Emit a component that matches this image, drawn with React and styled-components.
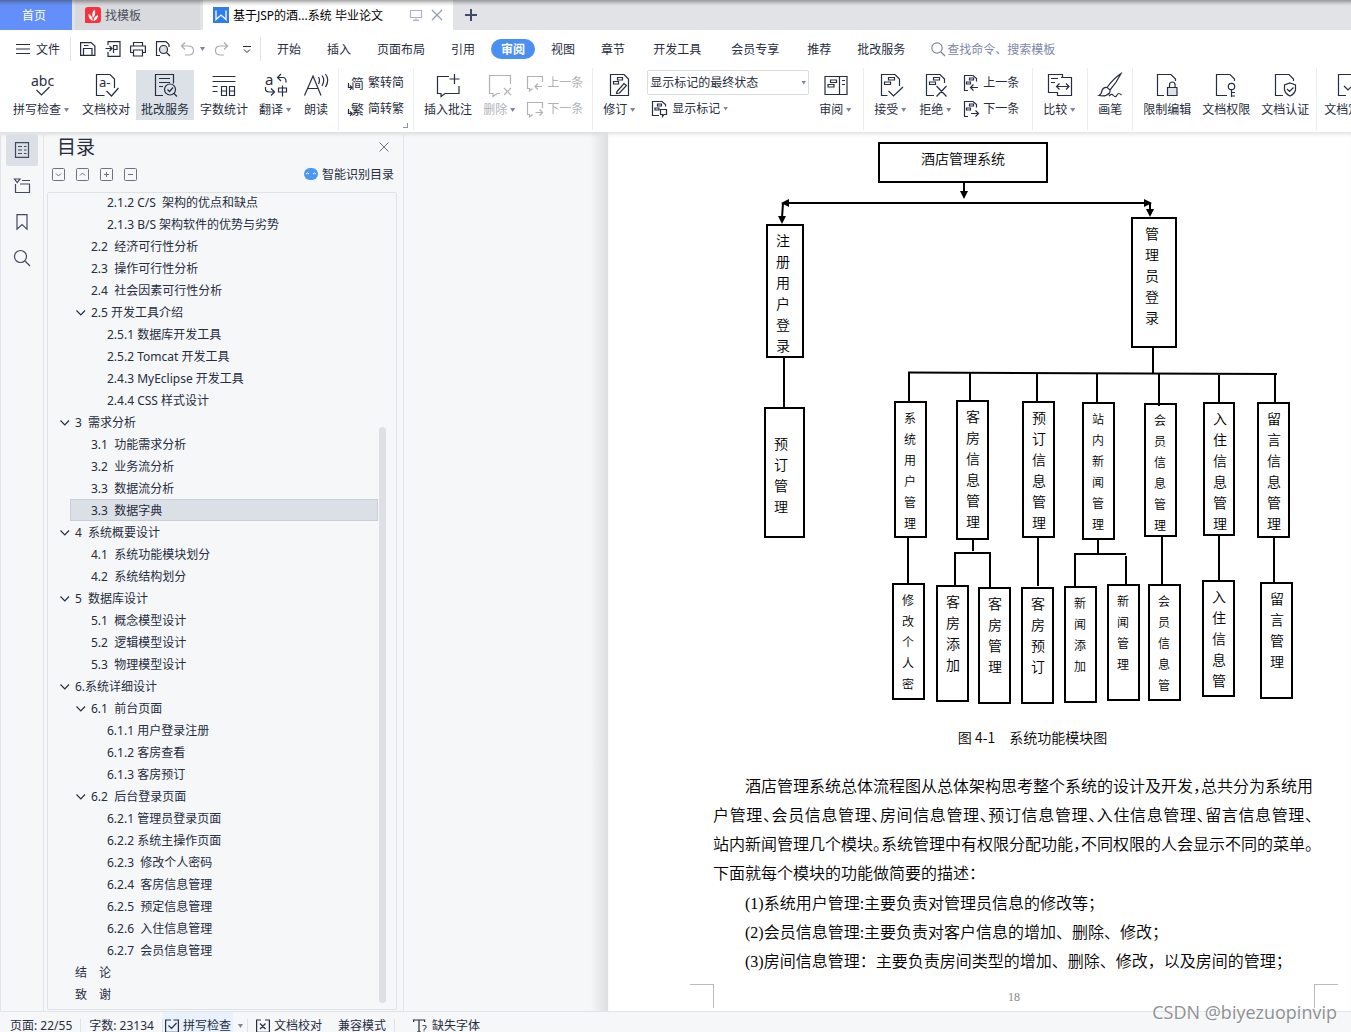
import { useState } from "react";
import styled, { createGlobalStyle } from "styled-components";

const GlobalStyle = createGlobalStyle`
* { box-sizing: border-box; }
body {
margin: 0;
overflow: hidden;
font-family: "Noto Sans", "Noto Sans CJK SC", sans-serif;
font-size: 12px;
color: #262d40;
}
button, input, select {
font: inherit;
color: inherit;
margin: 0;
padding: 0;
border: none;
background: none;
}
button { white-space: nowrap; cursor: pointer; }
svg { display: block; flex: none; overflow: visible; }
`

const Window = styled.div`
height: 100vh;
display: flex;
flex-direction: column;
background: #f5f7f9;
overflow: hidden;
position: relative;
`

/* ---------- tab bar ---------- */
const TabBar = styled.header`
height: 30px;
flex: none;
display: flex;
gap: 3px;
background: #e2e3e7;
position: relative;
&::after {
content: "";
position: absolute;
inset: 0 0 auto 0;
height: 6px;
pointer-events: none;
background: linear-gradient(rgba(60, 60, 60, 0.45), rgba(60, 60, 60, 0.12) 60%, transparent);
}
`
const HomeTab = styled.button`
width: 72px;
padding-right: 4px;
background: #628ffa;
color: white;
`
const FileTab = styled.div`
width: ${props => props.$active ? "250px" : "125px"};
padding: 0 10px;
display: flex;
align-items: center;
gap: 4px;
white-space: nowrap;
background: ${props => props.$active ? "white" : "#d9dadd"};
color: ${props => props.$active ? "black" : "#4b4f5c"};
`
const TabTools = styled.span`
margin-left: auto;
display: flex;
align-items: center;
gap: 9px;
`
const NewTab = styled.button`
padding: 0 9px;
`

/* ---------- menu ---------- */
const MenuBar = styled.nav`
height: 38px;
flex: none;
display: flex;
align-items: center;
padding-left: 16px;
background: white;
`
const FileMenu = styled.button`
display: flex;
align-items: center;
gap: 6px;
margin-right: 10px;
`
const MenuDivider = styled.span`
width: 1px;
height: 24px;
background: #dfe2e8;
`
const QuickTools = styled.div`
display: flex;
align-items: center;
gap: 9px;
padding-left: 9px;
width: 189px;
`
const MenuTabs = styled.div`
display: flex;
gap: 6px;
padding-left: 6px;
`
const MenuTab = styled.button`
height: 20px;
line-height: 18px;
border-radius: 10px;
padding: 2px ${props => props.$wide ? "12px" : "10px"} 0;
background: ${props => props.$active ? "#4a90f2" : "transparent"};
color: ${props => props.$active ? "white" : "#262d40"};
font-weight: ${props => props.$active ? "bold" : "normal"};
`
const SearchBox = styled.label`
display: flex;
align-items: center;
gap: 2px;
margin-left: 16px;
color: #7b87a8;
input { width: 130px; outline: none; }
input::placeholder { color: #7b87a8; opacity: 1; }
`

/* ---------- ribbon ---------- */
const Ribbon = styled.div`
height: 64px;
flex: none;
display: flex;
gap: 1px;
padding-left: 8px;
background: white;
overflow: hidden;
`
const RibbonButton = styled.button`
flex: none;
height: 50px;
margin-top: 2px;
padding: 3px 5px 0;
display: flex;
flex-direction: column;
align-items: center;
gap: 4px;
background: ${props => props.$active ? "#dbe1e6" : "transparent"};
color: ${props => props.disabled ? "#b0b2b7" : "#262d40"};
`
const RibbonLabel = styled.span`
display: flex;
align-items: center;
line-height: 18px;
`
const Arrow = styled.i`
width: 5px;
height: 4px;
margin: 0 2px 0 3px;
background: #7b859c;
clip-path: polygon(0 0, 100% 0, 50% 100%);
`
const UndoArrow = styled(Arrow)`
margin: 0 0 0 -5px;
`
const RibbonDivider = styled.span`
width: 1px;
height: 62px;
flex: none;
margin: 0 ${props => props.$tight ? "1px" : "4px"};
background: #eceef2;
`
const Stack = styled.div`
flex: none;
margin-top: 2px;
padding: 0 ${props => props.$wide ? "8px" : "4px"} 0 4px;
display: flex;
flex-direction: column;
gap: 1px;
position: relative;
`
const StackButton = styled.button`
height: 25px;
padding-left: ${props => props.$inset ? "5px" : "0"};
display: flex;
align-items: center;
gap: 4px;
color: ${props => props.disabled ? "#b0b2b7" : "#262d40"};
`
const Launcher = styled.i`
position: absolute;
right: 0;
bottom: 4px;
width: 5px;
height: 5px;
border: solid #8b93a5;
border-width: 0 1px 1px 0;
`
const MarkupSelect = styled.div`
width: 162px;
height: 25px;
display: flex;
align-items: center;
border: 1px solid #d9dce2;
border-radius: 2px;
select {
flex: 1;
appearance: none;
outline: none;
height: 23px;
padding-left: 2px;
}
`

/* ---------- body ---------- */
const Body = styled.div`
flex: 1;
min-height: 0;
display: flex;
box-shadow: inset 0 4px 4px -2px rgba(0, 0, 0, 0.12);
`
const Rail = styled.aside`
width: 44px;
flex: none;
padding: 2px 0 0 5px;
display: flex;
flex-direction: column;
gap: 4px;
border: solid #e1e4ea;
border-width: 0 1px;
`
const RailButton = styled.button`
width: 32px;
height: 32px;
display: flex;
align-items: center;
justify-content: center;
border-radius: 2px;
color: #414a62;
background: ${props => props.$active ? "#dbdfe6" : "transparent"};
`
const OutlinePanel = styled.section`
width: 360px;
flex: none;
padding: 0 6px 1px 3px;
display: flex;
flex-direction: column;
border-right: 1px solid #e1e4ea;
`
const PanelHeader = styled.div`
height: 30px;
padding: 0 8px 0 10px;
display: flex;
align-items: center;
justify-content: space-between;
`
const PanelTitle = styled.h2`
margin: 0;
font-size: 19px;
font-weight: normal;
line-height: 30px;
`
const PanelTools = styled.div`
height: 30px;
padding: 0 3px 6px 5px;
display: flex;
align-items: center;
gap: 11px;
`
const SmartButton = styled.button`
margin-left: auto;
display: flex;
align-items: center;
gap: 4px;
`
const TreeBox = styled.div`
flex: 1;
min-height: 0;
display: flex;
overflow: hidden;
border: 1px solid #dfe3e8;
border-radius: 2px;
`
const Tree = styled.ul`
list-style: none;
flex: 1;
margin: -2px 0 0;
padding: 0 0 0 22px;
`
const TreeRow = styled.li`
height: 22px;
display: flex;
align-items: center;
white-space: pre;
line-height: 18px;
padding: 2px 0 0 ${props => props.$level * 16 - 12}px;
border: 1px solid ${props => props.$selected ? "#c9ced9" : "transparent"};
background: ${props => props.$selected ? "#dbdfe6" : "transparent"};
`
const Toggle = styled.button`
width: 15px;
flex: none;
height: 18px;
margin-left: -15px;
display: flex;
align-items: center;
`
const ScrollTrack = styled.div`
width: 18px;
padding: 234px 10px 6px 1px;
`
const ScrollThumb = styled.div`
height: 100%;
border-radius: 4px;
background: #dde1e5;
`

/* ---------- document ---------- */
const Workspace = styled.main`
flex: 1;
min-width: 0;
padding-left: 186px;
display: flex;
`
const PageShadow = styled.div`
width: 18px;
flex: none;
background: linear-gradient(to right, transparent, #dcdee0);
`
const Page = styled.article`
flex: 1;
min-width: 0;
padding-left: 105px;
background: white;
color: black;
box-shadow: inset 0 4px 4px -2px rgba(0, 0, 0, 0.12);
`
const PageColumn = styled.div`
width: 600px;
`
const Canvas = styled.figure`
margin: 0;
height: 594px;
position: relative;
svg { position: absolute; inset: 0; }
`
const Node = styled.div`
position: absolute;
left: ${props => props.$x}px;
top: ${props => props.$y}px;
width: ${props => props.$w}px;
height: ${props => props.$h}px;
padding: ${props => props.$pad || "4px 0 0 8px"};
border: 2px solid black;
background: white;
font-family: "Noto Sans CJK SC", sans-serif;
font-weight: 350;
font-size: ${props => props.$size}px;
line-height: 21px;
text-align: ${props => props.$wideText ? "center" : "left"};
span { display: block; width: ${props => props.$wideText ? "auto" : props.$size + "px"}; word-break: break-all; }
`
const Caption = styled.p`
margin: 0 0 24px;
padding-left: 39px;
text-align: center;
font: 350 14px/22px "Noto Sans CJK SC", sans-serif;
`
const Paragraph = styled.div`
margin-bottom: 1px;
font: 350 16px/29px "Liberation Serif", "Noto Sans CJK SC", serif;
`
const Line = styled.div`
white-space: nowrap;
padding-left: ${props => props.$indent ? "32px" : "0"};
text-align-last: ${props => props.$last ? "left" : "justify"};
font-feature-settings: ${props => props.$full ? "normal" : '"halt"'};
`
const PageFoot = styled.footer`
margin: 8px -25px 0 -23px;
display: flex;
justify-content: space-between;
font: 12px/26px "Liberation Serif", serif;
color: #888;
`
const Corner = styled.i`
width: 24px;
height: 24px;
border: solid #b9bbbf;
border-width: ${props => props.$right ? "1px 0 0 1px" : "1px 1px 0 0"};
`
const Watermark = styled.div`
position: absolute;
right: 14px;
bottom: 8px;
font: 18px/24px "Open Sans", sans-serif;
color: #8f9195;
text-shadow: 1px 1px 0 white;
`

/* ---------- status bar ---------- */
const StatusBar = styled.footer`
height: 21px;
flex: none;
display: flex;
border-top: 1px solid #e1e4ea;
padding-left: 2px;
white-space: nowrap;
`
const StatusItem = styled.button`
height: 20px;
line-height: 12px;
display: flex;
align-items: center;
gap: 4px;
padding: 8px ${props => props.$tight ? "2px" : "8px"} 0 ${props => props.$tight ? "2px" : props.$wide ? "18px" : "8px"};
background: ${props => props.$active ? "#e8f1fc" : "transparent"};
`
const StatusDivider = styled.span`
width: 1px;
height: 13px;
margin-top: 7px;
background: #dfe2e8;
`

const Icon = ({ size = 24, children, width, ...rest }) => (
    <svg width={width || size} height={size} fill="none" stroke="currentColor" strokeWidth="1.2" aria-hidden="true" {...rest}>
        {children}
    </svg>
);

const Glyph = ({ x, y, size, children }) => (
    <text x={x} y={y} fontSize={size} fill="currentColor" stroke="none">{children}</text>
);

const marks = "M9.5 4.5h6v2.5h-6zM5.5 9h6v2.5h-6z";

const icons = {
    spell: <Icon><Glyph x="1" y="13" size="14">abc</Glyph><path d="M6.5 17l5 5 8-8" /></Icon>,
    proof: <Icon><path d="M10.500 22.5h-8v-21H16l4.500 4.500v9M12.500 18l5 5 7-8" /><Glyph x="5" y="13.500" size="13">a-</Glyph></Icon>,
    service: <Icon><path d="M10 22.500H2.500v-21h18v9M6 5.500h11M6 9.500h11M6 13.500h4" /><circle cx="17" cy="16.500" r="5.500" /><path d="M14.500 16.500l2 2 3.500-4M21 20.500l3 3" /></Icon>,
    count: <Icon><path d="M.5 3.500h23M.5 8.500h23M.5 13.500h5M.5 18.500h5M9.500 13.500h5v9h-5zM9.500 18h5M17.500 13.500h5v9h-5zM17.500 18h5" /></Icon>,
    translate: <Icon><Glyph x="1" y="11.500" size="15">a</Glyph><path d="M17 1l-3.500 3.500L17 8M14 4.500h5q3 0 3 4v1M1.500 14v2q0 3 4 3h4M7 15.500l3.500 3.500L7 22.500M14.500 15h8v4h-8zM18.500 12.500v11" /></Icon>,
    read: <Icon><path d="M.5 22.500L9 3l8 19.500M3.500 15.500H14M14.500 4q2 3 0 7M18 2.500q3.500 4.500 0 10.500M21.500 1q4.500 6 0 13" /></Icon>,
    comment: <Icon><path d="M13 3.500H1.500v17h3.500v3l4-3h14V13M18.500 1v10M13.500 6h10" /></Icon>,
    remove: <Icon><path d="M22.500 11V2.500h-21v18h3.500v3l4-3h3M16 15l7 7M23 15l-7 7" /></Icon>,
    revise: <Icon><path d="M16 1.500H2.500v21h18V6L16 1.500M9.500 4.500h5v2.500h-5zM5.500 8.500h5V11h-5z" /><path d="M9 18.500l7-8 2.500 2-7 7.500-3 .5z" /></Icon>,
    review: <Icon><path d="M1 3.500h22v18H1zM15.500 3.500v18M18 7.500h3M18 11.500h3M6.500 7h6v2.500h-6zM4 11.500h6V14H4z" /></Icon>,
    accept: <Icon><path d={`M8.500 22.500h-6v-21H16l4.500 4.500v7M9.500 18l5 5 9.500-9${marks}`} /></Icon>,
    reject: <Icon><path d={`M10 22.500H2.500v-21H16l4.500 4.500v4M12.500 13l10 10.500M22.500 13l-10 10.500${marks}`} /></Icon>,
    compare: <Icon><path d="M14.500 4V1.500H.5v18h9M9.500 19v3.500h14v-18H13M3 5.500h7M3 9.500h4M8.500 13.500h12M11.500 10.500l-3 3 3 3M18 10.500l3 3-3 3" /></Icon>,
    brush: <Icon><path d="M23 .5q-8 5.500-14 14l3 2.500Q19 9 23 .5zM9 14.500q-4-.5-5 3-.5 4-3 5 7 1.500 10.500-2.500 1-1.500.500-3M11 23q2.500-3 4.500-.500t3.500-.5 4.500 0" /></Icon>,
    lock: <Icon><path d="M9 22.500H2.500v-21H16l4.500 4.500v2" /><path fill="#dfe3e8" d="M12.500 14.500h9.500v8h-9.500z" /><path d="M14.500 14.500v-2.500q0-3 2.800-3t2.800 3v2.500" /></Icon>,
    key: <Icon><path d="M13 22.500H2.500v-21H16l4.500 4.500v2M17.500 17v7M17.500 19.500h3.500M17.500 23h3.500" /><circle cx="17.500" cy="13.500" r="3.200" /></Icon>,
    shield: <Icon><path d="M10 22.500H2.500v-21H16l4.500 4.500v2M17 10l5.500 2v5q-1 4-5.500 6-4.500-2-5.500-6v-5zM14 16l2.500 2.500 4-4" /></Icon>,
    stamp: <Icon><path d="M10 22.500H2.500v-21H16l4.500 4.500M8 13l4 4 8-8" /></Icon>,
    toSimple: <Icon size="16"><Glyph x="3" y="13" size="13">简</Glyph><path d="M.5 8v4.500h3M2 10.500l2 2-2 2.300" /></Icon>,
    toTrad: <Icon size="16"><Glyph x="3" y="13" size="13">繁</Glyph><path d="M.5 8v4.500h3M2 10.500l2 2-2 2.300" /></Icon>,
    prevNote: <Icon size="16"><path d="M15.500 7V1.500h-15v12h2V16l3-2.500M15 11.500H8.500M11 8.500l-3 3 3 3" /></Icon>,
    nextNote: <Icon size="16"><path d="M15.500 7V1.500h-15v12h2V16l3-2.500M8.500 11.500H15M12.500 8.500l3 3-3 3" /></Icon>,
    prevDoc: <Icon size="16"><path d="M5 15.500H1.500v-15H10l3.500 3v3M6.500 3h4v2h-4zM3.500 7h4v2h-4zM8 12.500h7M10.500 9.500l-3 3 3 3" /></Icon>,
    nextDoc: <Icon size="16"><path d="M5 15.500H1.500v-15H10l3.500 3v3M6.500 3h4v2h-4zM3.500 7h4v2h-4zM8 12.500h7M12.500 9.500l3 3-3 3" /></Icon>,
    showMarks: <Icon size="16"><path d="M7 14.500H.5v-14H10l3.500 3v2M5.500 3h4v2h-4zM3 7h4v2H3zM8.500 8.500h6v5h-2.500l-1.500 2v-2h-2z" /></Icon>,
    save: <Icon size="16"><path d="M.6 1.600h10.500l3.800 3.500v9.300H.6zM3.500 14.400V7.500h8.500v6.900M4 4.500h4.500" /></Icon>,
    export: <Icon size="16"><path d="M3 4V.6h12v14.800H3V11M.5 7.500h6M4.500 5l2.500 2.500L4.500 10M8.500 12V4.500h3.500v4H8.500" /></Icon>,
    print: <Icon size="16"><path d="M3.500 5V1.500h9V5M3.500 11.500H.6V5h14.800v6.500h-2.900M3.500 9h9v6h-9z" /></Icon>,
    preview: <Icon size="16"><path d="M5 14.500H1.500V.6H11l3 3V6" /><circle cx="8.500" cy="8.500" r="4" fill="#dfe3e8" /><path d="M11.500 11.500l3.500 3.500" /></Icon>,
    undo: <Icon size="16" color="#a9abb0"><path d="M5 1.500L1.500 5 5 8.500M2 5h6.500q5 0 5 4.500t-5 4.500H5" /></Icon>,
    redo: <Icon size="16" color="#a9abb0"><path d="M10 1.500L13.500 5 10 8.500M13 5H6.500q-5 0-5 4.500t5 4.500H10" /></Icon>,
    more: <Icon size="16" strokeWidth="1"><path d="M4 5.500h8M5 8.500l3 3 3-3" /></Icon>,
    search: <Icon size="14"><circle cx="6" cy="6" r="5.200" /><path d="M10 10l4 4" /></Icon>,
    chevron: <Icon size="6" width="10"><path d="M.5 .5l4.300 4.300L9 .5" /></Icon>
};

const Big = ({ icon, label, arrow, ...rest }) => (
    <RibbonButton {...rest}>
        {icons[icon]}
        <RibbonLabel>{label}{arrow && <Arrow />}</RibbonLabel>
    </RibbonButton>
);

const Small = ({ icon, label, arrow, ...rest }) => (
    <StackButton {...rest}>
        {icons[icon]}
        <RibbonLabel>{label}{arrow && <Arrow />}</RibbonLabel>
    </StackButton>
);

const menuTabs = ["开始", "插入", "页面布局", "引用", "审阅", "视图", "章节", "开发工具", "会员专享", "推荐", "批改服务"];

const outline = [
    [3, "2.1.2 C/S  架构的优点和缺点"],
    [3, "2.1.3 B/S 架构软件的优势与劣势"],
    [2, "2.2  经济可行性分析"],
    [2, "2.3  操作可行性分析"],
    [2, "2.4  社会因素可行性分析"],
    [2, "2.5 开发工具介绍", true],
    [3, "2.5.1 数据库开发工具"],
    [3, "2.5.2 Tomcat 开发工具"],
    [3, "2.4.3 MyEclipse 开发工具"],
    [3, "2.4.4 CSS 样式设计"],
    [1, "3  需求分析", true],
    [2, "3.1  功能需求分析"],
    [2, "3.2  业务流分析"],
    [2, "3.3  数据流分析"],
    [2, "3.3  数据字典"],
    [1, "4  系统概要设计", true],
    [2, "4.1  系统功能模块划分"],
    [2, "4.2  系统结构划分"],
    [1, "5  数据库设计", true],
    [2, "5.1  概念模型设计"],
    [2, "5.2  逻辑模型设计"],
    [2, "5.3  物理模型设计"],
    [1, "6.系统详细设计", true],
    [2, "6.1  前台页面", true],
    [3, "6.1.1 用户登录注册"],
    [3, "6.1.2 客房查看"],
    [3, "6.1.3 客房预订"],
    [2, "6.2  后台登录页面", true],
    [3, "6.2.1 管理员登录页面"],
    [3, "6.2.2 系统主操作页面"],
    [3, "6.2.3  修改个人密码"],
    [3, "6.2.4  客房信息管理"],
    [3, "6.2.5  预定信息管理"],
    [3, "6.2.6  入住信息管理"],
    [3, "6.2.7  会员信息管理"],
    [1, "结　论"],
    [1, "致　谢"]
];

// text, x, y, width, height, font size, padding
const nodes = [
    ["注册用户登录", 53, 92, 38, 134, 14],
    ["管理员登录", 418, 85, 46, 131, 14, "4px 0 0 12px"],
    ["预订管理", 51, 275, 41, 131, 14, "24px 0 0 8px"],
    ["系统用户管理", 181, 269, 33, 137, 12],
    ["客房信息管理", 243, 268, 33, 140, 14],
    ["预订信息管理", 309, 269, 33, 137, 14],
    ["站内新闻管理", 369, 270, 33, 138, 12],
    ["会员信息管理", 431, 271, 33, 134, 12],
    ["入住信息管理", 490, 270, 32, 134, 14],
    ["留言信息管理", 544, 270, 33, 136, 14],
    ["修改个人密", 179, 451, 33, 117, 12],
    ["客房添加", 223, 453, 33, 117, 14],
    ["客房管理", 265, 455, 33, 117, 14],
    ["客房预订", 308, 455, 33, 117, 14],
    ["新闻添加", 351, 454, 33, 117, 12],
    ["新闻管理", 394, 452, 33, 117, 12],
    ["会员信息管", 435, 452, 33, 117, 12],
    ["入住信息管", 489, 448, 33, 117, 14],
    ["留言管理", 547, 450, 33, 117, 14]
];

const Diagram = () => (
    <Canvas>
        <Node $x={165} $y={10} $w={170} $h={41} $size={14} $pad="4px 0 0" $wideText><span>酒店管理系统</span></Node>
        {nodes.map(([text, x, y, w, h, size, pad]) => (
            <Node key={text} $x={x} $y={y} $w={w} $h={h} $size={size} $pad={pad}><span>{text}</span></Node>
        ))}
        <svg width="600" height="594" stroke="black" strokeWidth="2" fill="none" aria-hidden="true">
            <path d="M251 51v10M74 71h360M70 71l-1 15M437 71v8M71 226v49M440 216v26" />
            <path d="M195 240.500L564 242" />
            <path d="M196 240v29M257 241v27M324 241v28M384 241v29M446 242v32M506 243v27M562 242v28" />
            <path d="M195 406v45M260 408v11M242 453v-32h35v34M325 406v48M385 408v14M362 456v-34h51M413 424v28M449 405v47M506 404v44M561 406v44" />
            <path stroke="none" fill="black" d="M247 59h8l-4 8zM68 71l8-4v8zM439 71l-8-4v8zM65 84h8l-4 8zM433 77h8l-4 8z" />
        </svg>
    </Canvas>
);

const App = () => {
    const [active, setActive] = useState("审阅");
    const [selected, setSelected] = useState(14);

    return (
        <Window>
            <GlobalStyle />
            <TabBar>
                <HomeTab>首页</HomeTab>
                <FileTab>
                    <svg width="16" height="16">
                        <path d="M3 0h10q3 0 3 3v10q0 3-3 3H0V3q0-3 3-3z" fill="#f5333f" />
                        <path d="M8 14Q3 12 3.500 7 7 8 8 14zM8 11Q6 6 9.500 2.500 11.500 7 8 11zM8.500 14q0-4.500 4.500-6 0 5-4.500 6z" fill="white" />
                    </svg>
                    找模板
                </FileTab>
                <FileTab $active>
                    <svg width="16" height="16">
                        <path d="M0 0h16v16H0z" fill="#2f7cf0" />
                        <path d="M3 3.500v9L8 8l5 4.500v-9" fill="none" stroke="white" strokeWidth="1.300" />
                    </svg>
                    基于JSP的酒...系统 毕业论文
                    <TabTools>
                        <Icon size="12" color="#aab2c6"><path d="M.5 1.500h11v7H.5zM6 8.500V11M3 11.400h6" /></Icon>
                        <Icon size="12" color="#8f9ab5"><path d="M1 1l10 10M11 1L1 11" /></Icon>
                    </TabTools>
                </FileTab>
                <NewTab aria-label="新建"><Icon size="12" color="#414a66" strokeWidth="2"><path d="M6 0v12M0 6h12" /></Icon></NewTab>
            </TabBar>

            <MenuBar>
                <FileMenu><Icon size="14"><path d="M0 2.500h14M0 7h14M0 11.500h14" /></Icon>文件</FileMenu>
                <MenuDivider />
                <QuickTools>
                    {icons.save}{icons.export}{icons.print}{icons.preview}{icons.undo}<UndoArrow />{icons.redo}{icons.more}
                </QuickTools>
                <MenuDivider />
                <MenuTabs>
                    {menuTabs.map(tab => (
                        <MenuTab key={tab} $active={tab === active} $wide={tab === "开发工具" || tab === "会员专享"} onClick={() => setActive(tab)}>{tab}</MenuTab>
                    ))}
                </MenuTabs>
                <SearchBox>{icons.search}<input placeholder="查找命令、搜索模板" aria-label="查找命令、搜索模板" /></SearchBox>
            </MenuBar>

            <Ribbon>
                <Big icon="spell" label="拼写检查" arrow />
                <Big icon="proof" label="文档校对" />
                <Big icon="service" label="批改服务" $active />
                <Big icon="count" label="字数统计" />
                <Big icon="translate" label="翻译" arrow />
                <Big icon="read" label="朗读" />
                <RibbonDivider />
                <Stack>
                    <Small icon="toSimple" label="繁转简" />
                    <Small icon="toTrad" label="简转繁" />
                    <Launcher />
                </Stack>
                <RibbonDivider />
                <Big icon="comment" label="插入批注" />
                <Big icon="remove" label="删除" arrow disabled />
                <Stack>
                    <Small icon="prevNote" label="上一条" disabled />
                    <Small icon="nextNote" label="下一条" disabled />
                </Stack>
                <RibbonDivider />
                <Big icon="revise" label="修订" arrow />
                <Stack>
                    <MarkupSelect>
                        <select aria-label="显示标记"><option>显示标记的最终状态</option></select>
                        <Arrow />
                    </MarkupSelect>
                    <Small icon="showMarks" label="显示标记" arrow $inset />
                </Stack>
                <Big icon="review" label="审阅" arrow />
                <RibbonDivider />
                <Big icon="accept" label="接受" arrow />
                <Big icon="reject" label="拒绝" arrow />
                <Stack $wide>
                    <Small icon="prevDoc" label="上一条" />
                    <Small icon="nextDoc" label="下一条" />
                </Stack>
                <RibbonDivider />
                <Big icon="compare" label="比较" arrow />
                <RibbonDivider />
                <Big icon="brush" label="画笔" />
                <RibbonDivider />
                <Big icon="lock" label="限制编辑" />
                <Big icon="key" label="文档权限" />
                <Big icon="shield" label="文档认证" />
                <RibbonDivider $tight />
                <Big icon="stamp" label="文档定稿" />
            </Ribbon>

            <Body>
                <Rail>
                    <RailButton $active aria-label="目录"><Icon size="16"><path d="M1.500 .6h13v14.800h-13zM4 4.500h4M10 4.500h2.500M4 8h4M10 8h2.500M4 11.500h4M10 11.500h2.500" /></Icon></RailButton>
                    <RailButton aria-label="章节"><Icon size="16"><path d="M.5 1h5.500L3.200 4.500zM8 2.500h8M1.500 6v8.500h14V6H6" /></Icon></RailButton>
                    <RailButton aria-label="书签"><Icon size="16"><path d="M3 .6h10v14.500l-5-4.500-5 4.500z" /></Icon></RailButton>
                    <RailButton aria-label="查找"><Icon size="16"><circle cx="6.500" cy="6.500" r="6" /><path d="M11 11l5 5" /></Icon></RailButton>
                </Rail>

                <OutlinePanel>
                    <PanelHeader>
                        <PanelTitle>目录</PanelTitle>
                        <button aria-label="关闭"><Icon size="10" strokeWidth="1" color="#6b7285"><path d="M.5 .5l9 9M9.500 .5l-9 9" /></Icon></button>
                    </PanelHeader>
                    <PanelTools>
                        {["M4 5.500l2.500 2.500L9 5.500", "M4 7.500L6.500 5 9 7.500", "M4 6.500h5M6.500 4v5", "M4 6.500h5"].map(d => (
                            <button key={d} aria-label="层级"><Icon size="13" strokeWidth="1" color="#6b7285"><rect x=".5" y=".5" width="12" height="12" rx="1" /><path d={d} /></Icon></button>
                        ))}
                        <SmartButton>
                            <svg width="14" height="12"><rect width="14" height="12" rx="6" fill="#4b97f2" /><path d="M2 6q1.500-2 3 0M9 6q1.500-2 3 0" fill="none" stroke="white" /></svg>
                            智能识别目录
                        </SmartButton>
                    </PanelTools>
                    <TreeBox>
                        <Tree>
                            {outline.map(([level, text, open], i) => (
                                <TreeRow key={text} $level={level} $selected={i === selected} onClick={() => setSelected(i)}>
                                    {open && <Toggle aria-label="折叠">{icons.chevron}</Toggle>}
                                    {text}
                                </TreeRow>
                            ))}
                        </Tree>
                        <ScrollTrack><ScrollThumb /></ScrollTrack>
                    </TreeBox>
                </OutlinePanel>

                <Workspace>
                    <PageShadow />
                    <Page>
                        <PageColumn>
                            <Diagram />
                            <Caption>图 4-1　系统功能模块图</Caption>
                            <Paragraph>
                                <Line $indent>酒店管理系统总体流程图从总体架构思考整个系统的设计及开发，总共分为系统用</Line>
                                <Line>户管理、会员信息管理、房间信息管理、预订信息管理、入住信息管理、留言信息管理、</Line>
                                <Line>站内新闻管理几个模块。系统管理中有权限分配功能，不同权限的人会显示不同的菜单。</Line>
                                <Line $last>下面就每个模块的功能做简要的描述：</Line>
                            </Paragraph>
                            <Paragraph>
                                <Line $indent $last $full>(1)系统用户管理:主要负责对管理员信息的修改等；</Line>
                                <Line $indent $last $full>(2)会员信息管理:主要负责对客户信息的增加、删除、修改；</Line>
                                <Line $indent $last $full>(3)房间信息管理：主要负责房间类型的增加、删除、修改，以及房间的管理；</Line>
                            </Paragraph>
                            <PageFoot><Corner />18<Corner $right /></PageFoot>
                        </PageColumn>
                    </Page>
                </Workspace>
            </Body>

            <StatusBar>
                <StatusItem>页面: 22/55</StatusItem>
                <StatusDivider />
                <StatusItem>字数: 23134</StatusItem>
                <StatusDivider />
                <StatusItem $tight $active><Icon size="14"><path d="M6 1H.6v12.400h12.800V1H8.500M3.500 6.500l3 3 5-5.500" /></Icon>拼写检查</StatusItem>
                <StatusItem $tight><Arrow /></StatusItem>
                <StatusDivider />
                <StatusItem><Icon size="14"><path d="M5 1H.6v12.400h12.800V1H9M4 4.500l5.500 5.500M9.500 4.500L4 10" /></Icon>文档校对</StatusItem>
                <StatusItem>兼容模式</StatusItem>
                <StatusDivider />
                <StatusItem $wide><Icon size="15"><path d="M.6 3V1h11v2M6 1v12M4 13h4" /><Glyph x="9" y="14" size="11">?</Glyph></Icon>缺失字体</StatusItem>
            </StatusBar>
            <Watermark>CSDN @biyezuopinvip</Watermark>
        </Window>
    );
};

export default App;
